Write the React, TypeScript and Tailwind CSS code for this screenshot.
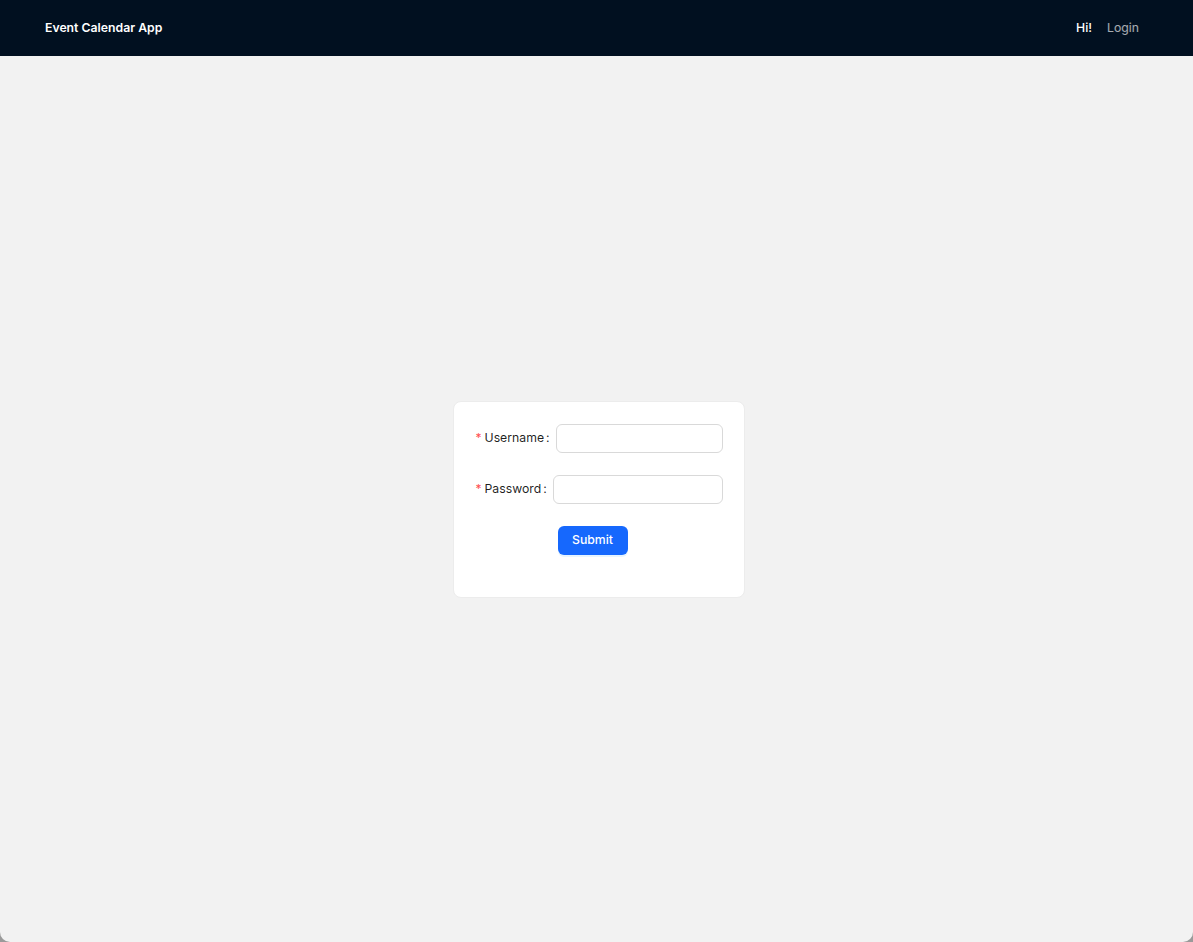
import { useState } from "react";

function Field({ label, type, value, onChange }: { label: string; type: string; value: string; onChange: (v: string) => void }) {
  return (
    <div className="flex items-center">
      <label className="flex shrink-0 items-center whitespace-nowrap pr-[6px] text-[12.25px] text-black/[0.88]">
        <span className="mr-[3px] text-[12px] leading-none text-[#ff4d4f]">*</span>
        {label}
        <span className="ml-[2px]">:</span>
      </label>
      <input
        type={type}
        value={value}
        onChange={(e) => onChange(e.target.value)}
        className="h-[29px] min-w-0 flex-1 rounded-[6px] border border-[#d9d9d9] bg-white px-[10px] text-[12.25px] outline-none focus:border-[#4096ff]"
      />
    </div>
  );
}

export default function App() {
  const [username, setUsername] = useState("");
  const [password, setPassword] = useState("");

  return (
    <div className="h-[942px] bg-[#9a9a9a] font-['Inter','Noto_Sans',sans-serif]">
      <div className="flex h-full flex-col overflow-hidden rounded-b-[10px] bg-[#f2f2f2]">
        <header className="flex h-[56px] shrink-0 items-center justify-between bg-[#011020] pl-[45px] pr-[54px]">
          <span className="text-[12.25px] font-semibold text-white">Event Calendar App</span>
          <nav className="flex items-center gap-[15px] text-[12.25px]">
            <span className="font-medium text-white">Hi!</span>
            <a className="cursor-pointer text-white/65">Login</a>
          </nav>
        </header>

        <main className="flex flex-1 items-center justify-center pl-[4px]">
          <form
            className="flex w-[292px] flex-col gap-[22px] rounded-[8px] border border-[#ececec] bg-white pb-[42px] pl-[22px] pr-[21px] pt-[22px]"
            onSubmit={(e) => e.preventDefault()}
          >
            <Field label="Username" type="text" value={username} onChange={setUsername} />
            <Field label="Password" type="password" value={password} onChange={setPassword} />
            <div className="flex">
              <button
                type="submit"
                className="ml-[82px] h-[29px] w-[70px] rounded-[6px] bg-[#1668fd] text-[12.25px] font-medium text-white shadow-[0_2px_0_rgba(5,145,255,0.1)]"
              >
                Submit
              </button>
            </div>
          </form>
        </main>
      </div>
    </div>
  );
}
